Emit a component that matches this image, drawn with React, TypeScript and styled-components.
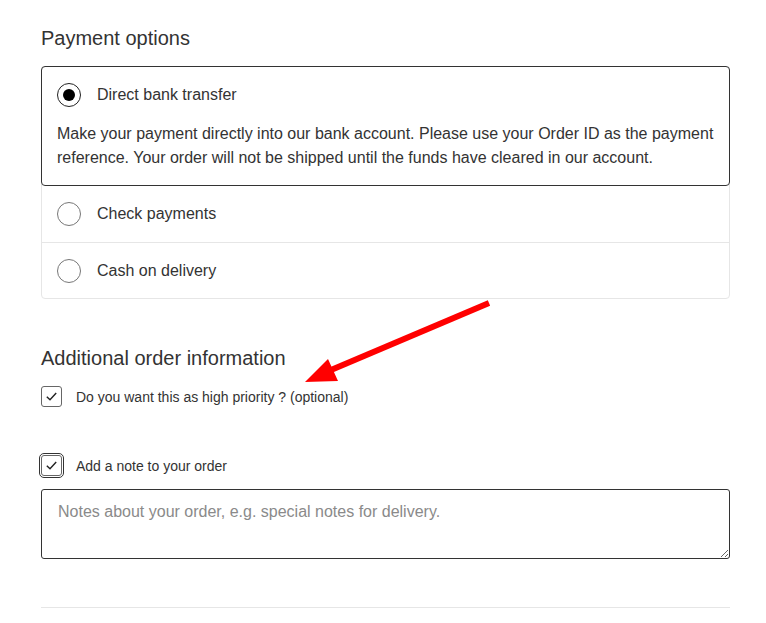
import React, { useState } from 'react';
import styled, { createGlobalStyle } from 'styled-components';

const GlobalStyle = createGlobalStyle`
  html, body {
    margin: 0;
    padding: 0;
    background: #fff;
  }
  body {
    font-family: "Liberation Sans", Arial, sans-serif;
    color: #333;
  }
`;

const methods = [
  {
    id: 'bacs',
    label: 'Direct bank transfer',
    description:
      'Make your payment directly into our bank account. Please use your Order ID as the payment reference. Your order will not be shipped until the funds have cleared in our account.',
  },
  { id: 'cheque', label: 'Check payments', description: '' },
  { id: 'cod', label: 'Cash on delivery', description: '' },
];

function App() {
  const [selected, setSelected] = useState('bacs');
  const [priority, setPriority] = useState(true);
  const [note, setNote] = useState(true);

  return (
    <Page>
      <GlobalStyle />
      <Heading>Payment options</Heading>
      <MethodList>
        {methods.map((m) => {
          const active = m.id === selected;
          return (
            <Method key={m.id} $active={active}>
              <MethodHeader $active={active} onClick={() => setSelected(m.id)}>
                <Radio $active={active}>{active && <RadioDot />}</Radio>
                <MethodLabel>{m.label}</MethodLabel>
              </MethodHeader>
              {active && m.description && <Description>{m.description}</Description>}
            </Method>
          );
        })}
      </MethodList>

      <SecondHeading>Additional order information</SecondHeading>
      <CheckRow onClick={() => setPriority(!priority)}>
        <Box>{priority && <Check />}</Box>
        <CheckLabel>Do you want this as high priority ? (optional)</CheckLabel>
      </CheckRow>

      <NoteRow onClick={() => setNote(!note)}>
        <Box $focused>{note && <Check />}</Box>
        <CheckLabel>Add a note to your order</CheckLabel>
      </NoteRow>
      <Notes placeholder="Notes about your order, e.g. special notes for delivery." />

      <Divider />

      <Arrow width="766" height="623" viewBox="0 0 766 623">
        <line x1="489" y1="303" x2="331" y2="370" stroke="#ff0000" strokeWidth="6" />
        <polygon points="305,382 328,359 338,381" fill="#ff0000" />
      </Arrow>
    </Page>
  );
}

const Check = () => (
  <svg width="13" height="13" viewBox="0 0 13 13">
    <path d="M1.8 6.8 L5 9.8 L11.2 3" fill="none" stroke="#222" strokeWidth="1.4" />
  </svg>
);

const Page = styled.div`
  position: relative;
  width: 689px;
  padding: 26px 36px 20px 41px;
`;

const Heading = styled.h2`
  margin: 0 0 16px;
  font-size: 20px;
  font-weight: 400;
  line-height: 24px;
  color: #333;
`;

const SecondHeading = styled(Heading)`
  margin: 47px 0 16px;
`;

const MethodList = styled.div`
  display: flex;
  flex-direction: column;
  border: 1px solid #e6e6e6;
  border-radius: 4px;
`;

const Method = styled.div<{ $active: boolean }>`
  border: ${(p) => (p.$active ? '1px solid #333' : '0')};
  border-bottom: 1px solid ${(p) => (p.$active ? '#333' : '#e6e6e6')};
  border-radius: ${(p) => (p.$active ? '4px' : '0')};
  margin: ${(p) => (p.$active ? '-1px -1px 0' : '0')};
  &:last-child {
    border-bottom: 0;
  }
`;

const MethodHeader = styled.div<{ $active: boolean }>`
  display: flex;
  align-items: center;
  gap: 16px;
  height: ${(p) => (p.$active ? '55px' : '56px')};
  padding: 0 ${(p) => (p.$active ? '15px' : '15px')};
  cursor: pointer;
  ${Method}:last-child & {
    height: 55px;
  }
`;

const Radio = styled.span<{ $active: boolean }>`
  display: flex;
  align-items: center;
  justify-content: center;
  box-sizing: border-box;
  width: 24px;
  height: 24px;
  border-radius: 50%;
  border: 1px solid ${(p) => (p.$active ? '#222' : '#777')};
  background: #fff;
`;

const RadioDot = styled.span`
  width: 12px;
  height: 12px;
  border-radius: 50%;
  background: #000;
`;

const MethodLabel = styled.span`
  font-size: 16px;
  color: #333;
`;

const Description = styled.p`
  margin: 0;
  padding: 0 15px 15px;
  font-size: 16px;
  line-height: 24px;
  color: #333;
`;

const CheckRow = styled.label`
  display: flex;
  align-items: center;
  gap: 14px;
  height: 21px;
  cursor: pointer;
`;

const NoteRow = styled(CheckRow)`
  margin-top: 48px;
`;

const Box = styled.span<{ $focused?: boolean }>`
  display: flex;
  align-items: center;
  justify-content: center;
  box-sizing: border-box;
  width: 21px;
  height: 21px;
  border: 1px solid #666;
  border-radius: 3px;
  background: #fff;
  outline: ${(p) => (p.$focused ? '1px solid #333' : 'none')};
  outline-offset: 1px;
`;

const CheckLabel = styled.span`
  font-size: 14px;
  color: #333;
`;

const Notes = styled.textarea`
  display: block;
  box-sizing: border-box;
  width: 100%;
  height: 70px;
  margin-top: 13px;
  padding: 10px 16px;
  border: 1px solid #333;
  border-radius: 3px;
  font-family: "Liberation Sans", Arial, sans-serif;
  font-size: 16px;
  line-height: 24px;
  color: #333;
  &::placeholder {
    color: #8a8a8a;
  }
`;

const Divider = styled.hr`
  margin: 48px 0 0;
  border: 0;
  border-top: 1px solid #e6e6e6;
`;

const Arrow = styled.svg`
  position: absolute;
  left: 0;
  top: 0;
  pointer-events: none;
`;

export default App;
